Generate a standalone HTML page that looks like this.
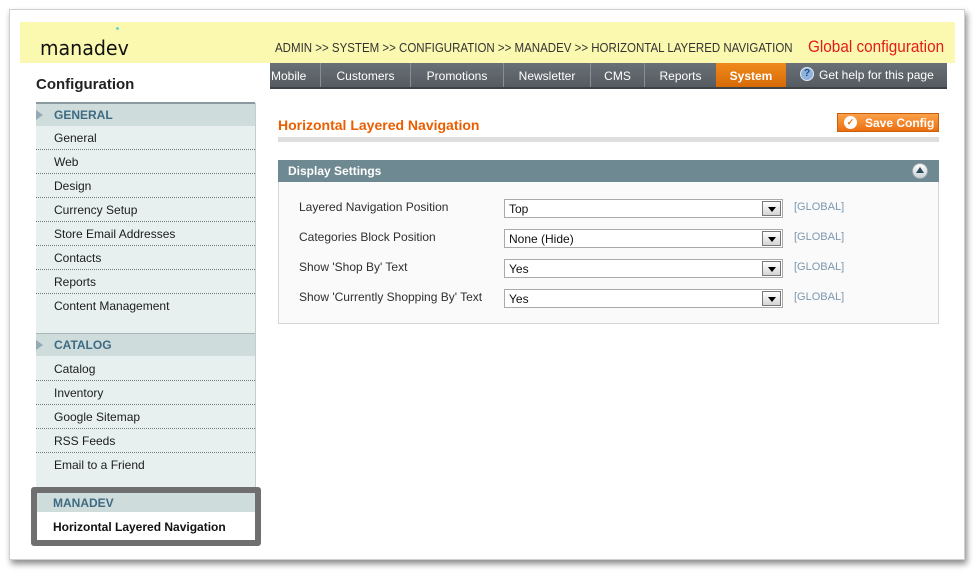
<!DOCTYPE html>
<html><head><meta charset="utf-8"><style>
*{margin:0;padding:0;box-sizing:border-box}
body{width:975px;height:574px;background:#fff;position:relative;overflow:hidden;font-family:"Liberation Sans",Arial,sans-serif;font-size:12px;color:#2f2f2f}
.a{position:absolute;white-space:nowrap}
#frame{left:9px;top:9px;width:956px;height:551px;border:1px solid #cfcfcf;background:#fff;box-shadow:2px 4px 6px rgba(0,0,0,.45)}
#hdr{left:20px;top:22px;width:935px;height:41px;background:#fbf9b0}
#side{left:36px;top:63px;width:220px;height:482px;background:#e7efef;border-right:1px solid #c5cccc}
.sh{position:absolute;left:0;width:219px;height:22px;background:#cfdcdc;color:#3e6b82;font-weight:bold;font-size:12px;padding:4px 0 0 18px}
.sh:before{content:"";position:absolute;left:0;top:6px;border-left:7px solid #94aab5;border-top:5px solid transparent;border-bottom:5px solid transparent}
.it{position:absolute;left:0;width:219px;height:24px;padding:5px 0 0 18px;font-size:12px;color:#1c1c1c;border-bottom:1px dotted #777}
.it.n{border-bottom:none}
#tabs{left:270px;top:63px;width:677px;height:26px;background:linear-gradient(#6a7176,#555b60);border-bottom:2px solid #3d4246}
.tb{position:absolute;top:0;height:24px;color:#fff;font-size:12px;padding-top:6px;text-align:center;border-right:1px solid #888e92}
.lbl{position:absolute;left:299px;font-size:12px;color:#2f2f2f}
.sel{position:absolute;left:504px;width:279px;height:19px;border:1px solid #aaa;background:#fff;font-size:12px;padding:2px 4px;color:#111}
.sel i{position:absolute;right:1px;top:1px;width:19px;height:15px;border:1px solid #777;background:linear-gradient(#fff,#d4d4d4)}
.sel i:after{content:"";position:absolute;left:5px;top:5px;border-top:5px solid #000;border-left:4px solid transparent;border-right:4px solid transparent}
.gl{position:absolute;left:794px;font-size:11px;color:#7c98b0}
</style></head><body>
<div id="frame" class="a"></div>
<div id="hdr" class="a">
  <div class="a" style="left:20px;top:14px;font-size:20px;color:#111;font-family:'DejaVu Sans',sans-serif;transform:scaleX(0.95);transform-origin:left">manadev</div>
  <div class="a" style="left:96px;top:5px;width:3px;height:3px;background:#6cd6c8;border-radius:2px"></div>
  <div class="a" style="left:255px;top:18px;font-size:13px;color:#333;transform:scaleX(0.885);transform-origin:left">ADMIN &gt;&gt; SYSTEM &gt;&gt; CONFIGURATION &gt;&gt; MANADEV &gt;&gt; HORIZONTAL LAYERED NAVIGATION</div>
  <div class="a" style="left:788px;top:15px;font-size:17px;color:#e51a1a;transform:scaleX(0.9);transform-origin:left">Global configuration</div>
</div>
<div id="side" class="a">
  <div class="a" style="left:0;top:0;width:220px;height:40px;background:#fff"></div>
  <div class="a" style="left:0;top:13px;font-size:15px;font-weight:bold;color:#222">Configuration</div>
  <div class="a" style="left:0;top:39px;width:219px;height:2px;background:#8a9a9e"></div>
  <div class="sh" style="top:41px">GENERAL</div>
  <div class="it" style="top:63px">General</div>
  <div class="it" style="top:87px">Web</div>
  <div class="it" style="top:111px">Design</div>
  <div class="it" style="top:135px">Currency Setup</div>
  <div class="it" style="top:159px">Store Email Addresses</div>
  <div class="it" style="top:183px">Contacts</div>
  <div class="it" style="top:207px">Reports</div>
  <div class="it n" style="top:231px">Content Management</div>
  <div class="a" style="left:0;top:270px;width:219px;height:1px;background:#a9b7b9"></div>
  <div class="sh" style="top:271px">CATALOG</div>
  <div class="it" style="top:294px">Catalog</div>
  <div class="it" style="top:318px">Inventory</div>
  <div class="it" style="top:342px">Google Sitemap</div>
  <div class="it" style="top:366px">RSS Feeds</div>
  <div class="it n" style="top:390px">Email to a Friend</div>
</div>
<div class="a" style="left:31px;top:487px;width:230px;height:59px;border:6px solid #6f6f6f;border-radius:3px;background:#fff">
  <div class="a" style="left:0;top:0;width:218px;height:19px;background:#cfdcdc;color:#3e6b82;font-weight:bold;font-size:12px;padding:3px 0 0 16px">MANADEV</div>
  <div class="a" style="left:16px;top:27px;font-weight:bold;font-size:12px;color:#111">Horizontal Layered Navigation</div>
</div>
<div id="tabs" class="a">
  <div class="tb" style="left:0;width:51px;text-align:left;padding-left:1px">Mobile</div>
  <div class="tb" style="left:51px;width:90px">Customers</div>
  <div class="tb" style="left:141px;width:93px">Promotions</div>
  <div class="tb" style="left:234px;width:87px">Newsletter</div>
  <div class="tb" style="left:321px;width:54px">CMS</div>
  <div class="tb" style="left:375px;width:71px;border-right:none">Reports</div>
  <div class="tb" style="left:446px;width:70px;background:linear-gradient(#f08a1c,#d86a06);font-weight:bold;border-right:none">System</div>
  <div class="a" style="left:530px;top:4px;width:14px;height:14px;border-radius:7px;background:#8fb3dc;border:1px solid #dfe8f3;color:#1d4f86;font-size:10px;font-weight:bold;text-align:center;line-height:12px">?</div>
  <div class="a" style="left:549px;top:5px;color:#fff;font-size:12px">Get help for this page</div>
</div>
<div class="a" style="left:278px;top:117px;font-size:14px;font-weight:bold;color:#eb5e00">Horizontal Layered Navigation</div>
<div class="a" style="left:837px;top:113px;width:102px;height:19px;background:linear-gradient(#fba14a,#ec6e0f);border:1px solid #c65f0e;color:#fff;font-weight:bold;font-size:12px;padding:2px 0 0 27px">Save Config</div>
<div class="a" style="left:844px;top:116px;width:13px;height:13px;border-radius:7px;background:#fff;color:#ec6e0f;font-size:9px;font-weight:bold;text-align:center;line-height:13px">✓</div>
<div class="a" style="left:278px;top:137px;width:661px;height:5px;background:#dedede"></div>
<div class="a" style="left:278px;top:160px;width:661px;height:164px;border:1px solid #d6d6d6;background:#fafafa"></div>
<div class="a" style="left:278px;top:160px;width:661px;height:22px;background:#6f8992;color:#fff;font-weight:bold;font-size:12px;padding:4px 0 0 10px">Display Settings</div>
<div class="a" style="left:912px;top:163px;width:16px;height:16px;border-radius:8px;background:linear-gradient(#fff,#c8d0d3);border:1px solid #9aa8ad"></div>
<div class="a" style="left:916px;top:167px;border-bottom:6px solid #2d4b5a;border-left:4px solid transparent;border-right:4px solid transparent"></div>
<div class="lbl" style="top:200px">Layered Navigation Position</div>
<div class="lbl" style="top:230px">Categories Block Position</div>
<div class="lbl" style="top:260px">Show 'Shop By' Text</div>
<div class="lbl" style="top:290px">Show 'Currently Shopping By' Text</div>
<div class="sel" style="top:199px">Top<i></i></div>
<div class="sel" style="top:229px">None (Hide)<i></i></div>
<div class="sel" style="top:259px">Yes<i></i></div>
<div class="sel" style="top:289px">Yes<i></i></div>
<div class="gl" style="top:201px">[GLOBAL]</div>
<div class="gl" style="top:231px">[GLOBAL]</div>
<div class="gl" style="top:261px">[GLOBAL]</div>
<div class="gl" style="top:291px">[GLOBAL]</div>
</body></html>
